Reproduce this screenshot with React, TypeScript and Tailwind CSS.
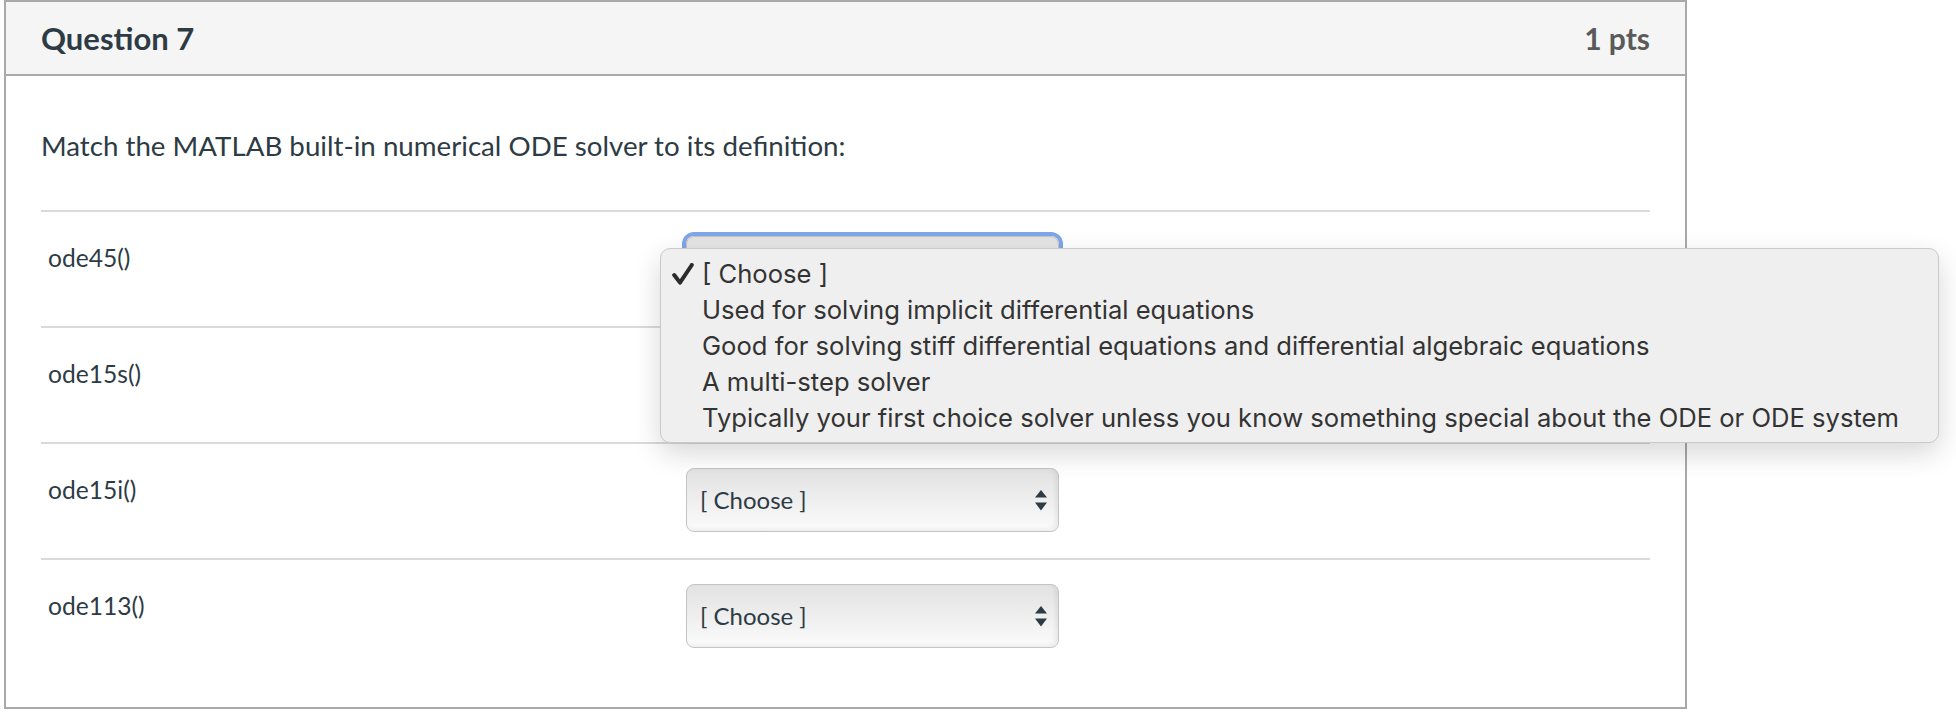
import React from "react";

function SelectArrows() {
  return (
    <svg width="12" height="21" viewBox="0 0 12 21" className="shrink-0">
      <polygon points="0,7.5 6,0 12,7.5" fill="#2d3b45" />
      <polygon points="0,12.5 12,12.5 6,20.5" fill="#2d3b45" />
    </svg>
  );
}

function FakeSelect({ focused }: { focused?: boolean }) {
  return (
    <div
      className={
        focused
          ? "w-[373px] h-[64px] shrink-0 rounded-[8px] border border-[#c4c4c4] bg-linear-to-b from-[#e2e2e2] to-[#fbfbfb] flex items-center justify-between pl-[13px] pr-[11px] shadow-[0_0_0_4px_#7fa6e8]"
          : "w-[373px] h-[64px] shrink-0 rounded-[8px] border border-[#c4c4c4] bg-linear-to-b from-[#e2e2e2] to-[#fbfbfb] flex items-center justify-between pl-[13px] pr-[11px] shadow-[inset_-3px_-2px_4px_rgba(0,0,0,0.06)]"
      }
    >
      <span className="text-[24px] text-[#2d3b45] leading-none">[ Choose ]</span>
      <SelectArrows />
    </div>
  );
}

export default function App() {
  const rows = ["ode45()", "ode15s()", "ode15i()", "ode113()"];
  const options = [
    "[ Choose ]",
    "Used for solving implicit differential equations",
    "Good for solving stiff differential equations and differential algebraic equations",
    "A multi-step solver",
    "Typically your first choice solver unless you know something special about the ODE or ODE system",
  ];
  return (
    <div className="relative w-[1956px] h-[714px] bg-white overflow-hidden font-['Lato',sans-serif] text-[#2d3b45]">
      <div className="ml-[4px] w-[1683px] border-2 border-[#a9a9a9] bg-white">
        <div className="h-[74px] bg-[#f5f5f5] border-b-2 border-[#a9a9a9] flex items-center justify-between px-[35px]">
          <span className="text-[31px] font-bold leading-none">Question 7</span>
          <span className="text-[30px] font-bold leading-none text-[#5a5a5a]">1 pts</span>
        </div>
        <div className="px-[35px] pt-[50px] pb-[33px]">
          <p className="text-[27.7px] leading-[40px]">
            Match the MATLAB built-in numerical ODE solver to its definition:
          </p>
          <div className="mt-[44px]">
            {rows.map((r, i) => (
              <div
                key={r}
                className="border-t-2 border-[#dadada] flex items-start pt-[24px] pb-[26px]"
              >
                <div className="w-[645px] shrink-0 pl-[7px] mt-[4px] text-[24.6px] leading-[36px]">
                  {r}
                </div>
                <FakeSelect focused={i === 0} />
              </div>
            ))}
          </div>
        </div>
      </div>

      <div className="absolute left-[660px] top-[248px] w-[1279px] h-[195px] rounded-[10px] bg-[#efefef] border border-[#c9c9c9] shadow-[0_10px_28px_rgba(0,0,0,0.16)] pt-[7px] font-['Inter',sans-serif] text-[25.6px] text-[#333333]">
        {options.map((o, i) => (
          <div key={o} className="flex items-center h-[36px]">
            <div className="w-[41px] shrink-0 pl-[11px] flex items-center">
              {i === 0 ? (
                <svg width="22" height="22" viewBox="0 0 22 22">
                  <path
                    d="M2.2 12 L8 19.6 L19.8 2"
                    fill="none"
                    stroke="#2b2b2b"
                    strokeWidth="4"
                    strokeLinecap="round"
                    strokeLinejoin="round"
                  />
                </svg>
              ) : null}
            </div>
            <span className="leading-none whitespace-nowrap">{o}</span>
          </div>
        ))}
      </div>
    </div>
  );
}
